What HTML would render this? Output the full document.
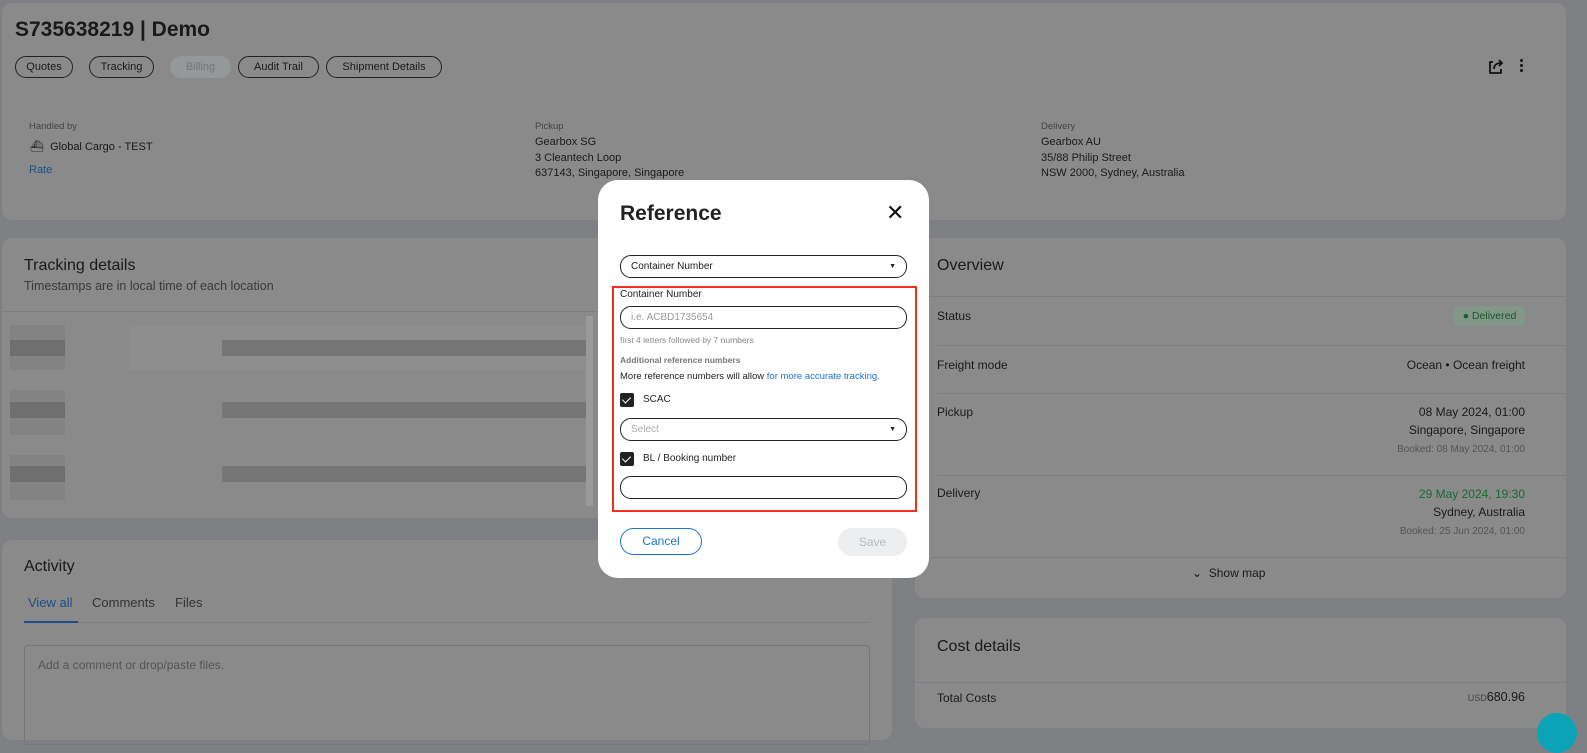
<!DOCTYPE html>
<html><head><meta charset="utf-8"><style>
*{box-sizing:border-box;margin:0;padding:0}
body{width:1587px;height:732px;overflow:hidden;background:#7f8084;font-family:"Liberation Sans",Arial,sans-serif;color:#1a1a1a;position:relative}
.card{position:absolute;background:#8a8a8a;border-radius:10px}
.abs{position:absolute;white-space:nowrap}
.pill{position:absolute;top:56px;height:22px;border:1px solid #222;border-radius:11px;font-size:11px;line-height:20px;text-align:center;color:#1a1a1a}
.sm{font-size:9.5px;color:#444}
.t12{font-size:12px;color:#1a1a1a}
.line{position:absolute;height:1px;background:#7c7e84}
.blk{position:absolute;background:#777}
.modal{position:absolute;left:598px;top:180px;width:331px;height:398px;background:#fff;border-radius:20px}
.inp{position:absolute;left:22px;width:287px;height:23px;border:1.3px solid #222;border-radius:11px;font-size:10px;line-height:21px;padding-left:10px}
.cb{position:absolute;left:22px;width:14px;height:14px;background:#222;border-radius:2px}
.cb:after{content:"";position:absolute;left:4px;top:2px;width:4px;height:7px;border:solid #fff;border-width:0 1.3px 1.3px 0;transform:rotate(45deg)}
</style></head><body>
<div class="card" style="left:2px;top:3px;width:1564px;height:217px"></div>
<div class="abs" style="left:15px;top:18px;font-size:21px;font-weight:bold">S735638219 | Demo</div>
<div class="pill" style="left:15px;width:58px">Quotes</div>
<div class="pill" style="left:89px;width:65px">Tracking</div>
<div class="pill" style="left:170px;width:61px;border-color:transparent;background:#949899;color:#777">Billing</div>
<div class="pill" style="left:238px;width:81px">Audit Trail</div>
<div class="pill" style="left:326px;width:116px">Shipment Details</div>
<svg class="abs" style="left:1487px;top:58px" width="18" height="18" viewBox="0 0 18 18"><path d="M6 4H3v11h11v-4" fill="none" stroke="#111" stroke-width="1.8" stroke-linejoin="round"/><path d="M7 11c0-4 3-6 7-6M12 2l3 3-3 3" fill="none" stroke="#111" stroke-width="1.8"/></svg>
<div class="abs" style="left:1520px;top:59px;width:4px"><div style="width:3px;height:3px;background:#111;border-radius:2px;margin-bottom:2px"></div><div style="width:3px;height:3px;background:#111;border-radius:2px;margin-bottom:2px"></div><div style="width:3px;height:3px;background:#111;border-radius:2px"></div></div>
<div class="abs sm" style="left:29px;top:121px">Handled by</div>
<div class="abs t12" style="left:30px;top:140px;font-size:11px">⛴&nbsp;&nbsp;Global Cargo - TEST</div>
<div class="abs" style="left:29px;top:164px;font-size:11px;color:#1d4e8a">Rate</div>
<div class="abs sm" style="left:535px;top:121px">Pickup</div>
<div class="abs" style="left:535px;top:135px;font-size:11px;line-height:15.5px;color:#1a1a1a">Gearbox SG<br>3 Cleantech Loop<br>637143, Singapore, Singapore</div>
<div class="abs sm" style="left:1041px;top:121px">Delivery</div>
<div class="abs" style="left:1041px;top:135px;font-size:11px;line-height:15.5px;color:#1a1a1a">Gearbox AU<br>35/88 Philip Street<br>NSW 2000, Sydney, Australia</div>

<div class="card" style="left:2px;top:238px;width:890px;height:280px"></div>
<div class="abs" style="left:24px;top:257px;font-size:16px">Tracking details</div>
<div class="abs" style="left:24px;top:279px;font-size:12.5px;color:#3a3a3a">Timestamps are in local time of each location</div>
<div class="line" style="left:2px;top:311px;width:890px"></div>
<div class="blk" style="left:10px;top:325px;width:55px;height:45px;background:#838383"></div>
<div class="blk" style="left:130px;top:325px;width:460px;height:45px;background:#8e8e8e"></div>
<div class="blk" style="left:10px;top:340px;width:55px;height:16px;background:#6f6f6f"></div>
<div class="blk" style="left:222px;top:340px;width:365px;height:16px;background:#767676"></div>
<div class="blk" style="left:10px;top:390px;width:55px;height:45px;background:#838383"></div>
<div class="blk" style="left:10px;top:402px;width:55px;height:16px;background:#6f6f6f"></div>
<div class="blk" style="left:222px;top:402px;width:365px;height:16px;background:#767676"></div>
<div class="blk" style="left:10px;top:455px;width:55px;height:45px;background:#838383"></div>
<div class="blk" style="left:10px;top:466px;width:55px;height:16px;background:#6f6f6f"></div>
<div class="blk" style="left:222px;top:466px;width:365px;height:16px;background:#767676"></div>
<div class="blk" style="left:586px;top:316px;width:7px;height:190px;background:#9a9a9a"></div>

<div class="card" style="left:2px;top:540px;width:890px;height:200px"></div>
<div class="abs" style="left:24px;top:558px;font-size:16px">Activity</div>
<div class="abs" style="left:28px;top:595px;font-size:13px;color:#1d4e8a">View all</div>
<div class="abs" style="left:92px;top:595px;font-size:13px;color:#333">Comments</div>
<div class="abs" style="left:175px;top:595px;font-size:13px;color:#333">Files</div>
<div class="line" style="left:24px;top:622px;width:846px"></div>
<div class="abs" style="left:24px;top:621px;width:54px;height:2px;background:#1d4e8a"></div>
<div class="abs" style="left:24px;top:645px;width:846px;height:100px;border:1px solid #777;border-radius:4px"></div>
<div class="abs" style="left:38px;top:658px;font-size:12px;color:#555">Add a comment or drop/paste files.</div>

<div class="card" style="left:915px;top:238px;width:651px;height:360px"></div>
<div class="abs" style="left:937px;top:257px;font-size:16px">Overview</div>
<div class="line" style="left:915px;top:296px;width:651px"></div>
<div class="abs t12" style="left:937px;top:309px;font-size:12px">Status</div>
<div class="abs" style="left:1454px;top:306px;width:71px;height:20px;background:#82968a;border-radius:3px;font-size:10.5px;line-height:20px;color:#165a2e;text-align:center">● Delivered</div>
<div class="line" style="left:937px;top:345px;width:629px"></div>
<div class="abs" style="left:937px;top:358px;font-size:12px">Freight mode</div>
<div class="abs" style="right:62px;top:358px;font-size:12px">Ocean • Ocean freight</div>
<div class="line" style="left:937px;top:393px;width:629px"></div>
<div class="abs" style="left:937px;top:405px;font-size:12px">Pickup</div>
<div class="abs" style="right:62px;top:403px;font-size:12px;text-align:right;line-height:18px">08 May 2024, 01:00<br>Singapore, Singapore<br><span style="font-size:10px;color:#555">Booked: 08 May 2024, 01:00</span></div>
<div class="line" style="left:937px;top:475px;width:629px"></div>
<div class="abs" style="left:937px;top:486px;font-size:12px">Delivery</div>
<div class="abs" style="right:62px;top:485px;font-size:12px;text-align:right;line-height:18px"><span style="color:#1a6b35">29 May 2024, 19:30</span><br>Sydney, Australia<br><span style="font-size:10px;color:#555">Booked: 25 Jun 2024, 01:00</span></div>
<div class="line" style="left:915px;top:557px;width:651px"></div>
<div class="abs" style="left:1192px;top:566px;font-size:12px">⌄&nbsp; Show map</div>
<div class="card" style="left:915px;top:618px;width:651px;height:110px"></div>
<div class="abs" style="left:937px;top:638px;font-size:16px">Cost details</div>
<div class="line" style="left:915px;top:682px;width:651px"></div>
<div class="abs" style="left:937px;top:691px;font-size:12px">Total Costs</div>
<div class="abs" style="right:62px;top:690px;font-size:12.5px"><span style="font-size:9px;color:#444">USD</span>680.96</div>
<div class="abs" style="left:1537px;top:713px;width:40px;height:40px;border-radius:20px;background:#0aa3b8"></div>

<div class="modal">
<div class="abs" style="left:22px;top:22px;font-size:21px;font-weight:bold;color:#222">Reference</div>
<div class="abs" style="left:288px;top:20px;font-size:22px;color:#111">✕</div>
<div class="inp" style="top:75px;color:#222">Container Number<span style="position:absolute;right:10px;font-size:7px">▼</span></div>
<div class="abs" style="left:14px;top:106px;width:305px;height:226px;border:2px solid #f0301c"></div>
<div class="abs" style="left:22px;top:109px;font-size:10px;color:#222">Container Number</div>
<div class="inp" style="top:126px;color:#999">i.e. ACBD1735654</div>
<div class="abs" style="left:22px;top:155px;font-size:8.5px;color:#888">first 4 letters followed by 7 numbers</div>
<div class="abs" style="left:22px;top:175px;font-size:8.5px;font-weight:bold;color:#777">Additional reference numbers</div>
<div class="abs" style="left:22px;top:191px;font-size:9.5px;color:#222">More reference numbers will allow <span style="color:#1a73d0">for more accurate tracking.</span></div>
<div class="cb" style="top:213px"></div>
<div class="abs" style="left:45px;top:214px;font-size:10px;color:#222">SCAC</div>
<div class="inp" style="top:238px;color:#aaa">Select<span style="position:absolute;right:10px;font-size:7px;color:#222">▼</span></div>
<div class="cb" style="top:272px"></div>
<div class="abs" style="left:45px;top:273px;font-size:10px;color:#222">BL / Booking number</div>
<div class="inp" style="top:296px"></div>
<div class="abs" style="left:22px;top:348px;width:82px;height:27px;border:1.3px solid #1a73d0;border-radius:14px;color:#1a73d0;font-size:12px;line-height:25px;text-align:center">Cancel</div>
<div class="abs" style="left:240px;top:348px;width:69px;height:28px;background:#eceeef;border-radius:14px;color:#bbb;font-size:12px;line-height:28px;text-align:center">Save</div>
</div>
</body></html>
